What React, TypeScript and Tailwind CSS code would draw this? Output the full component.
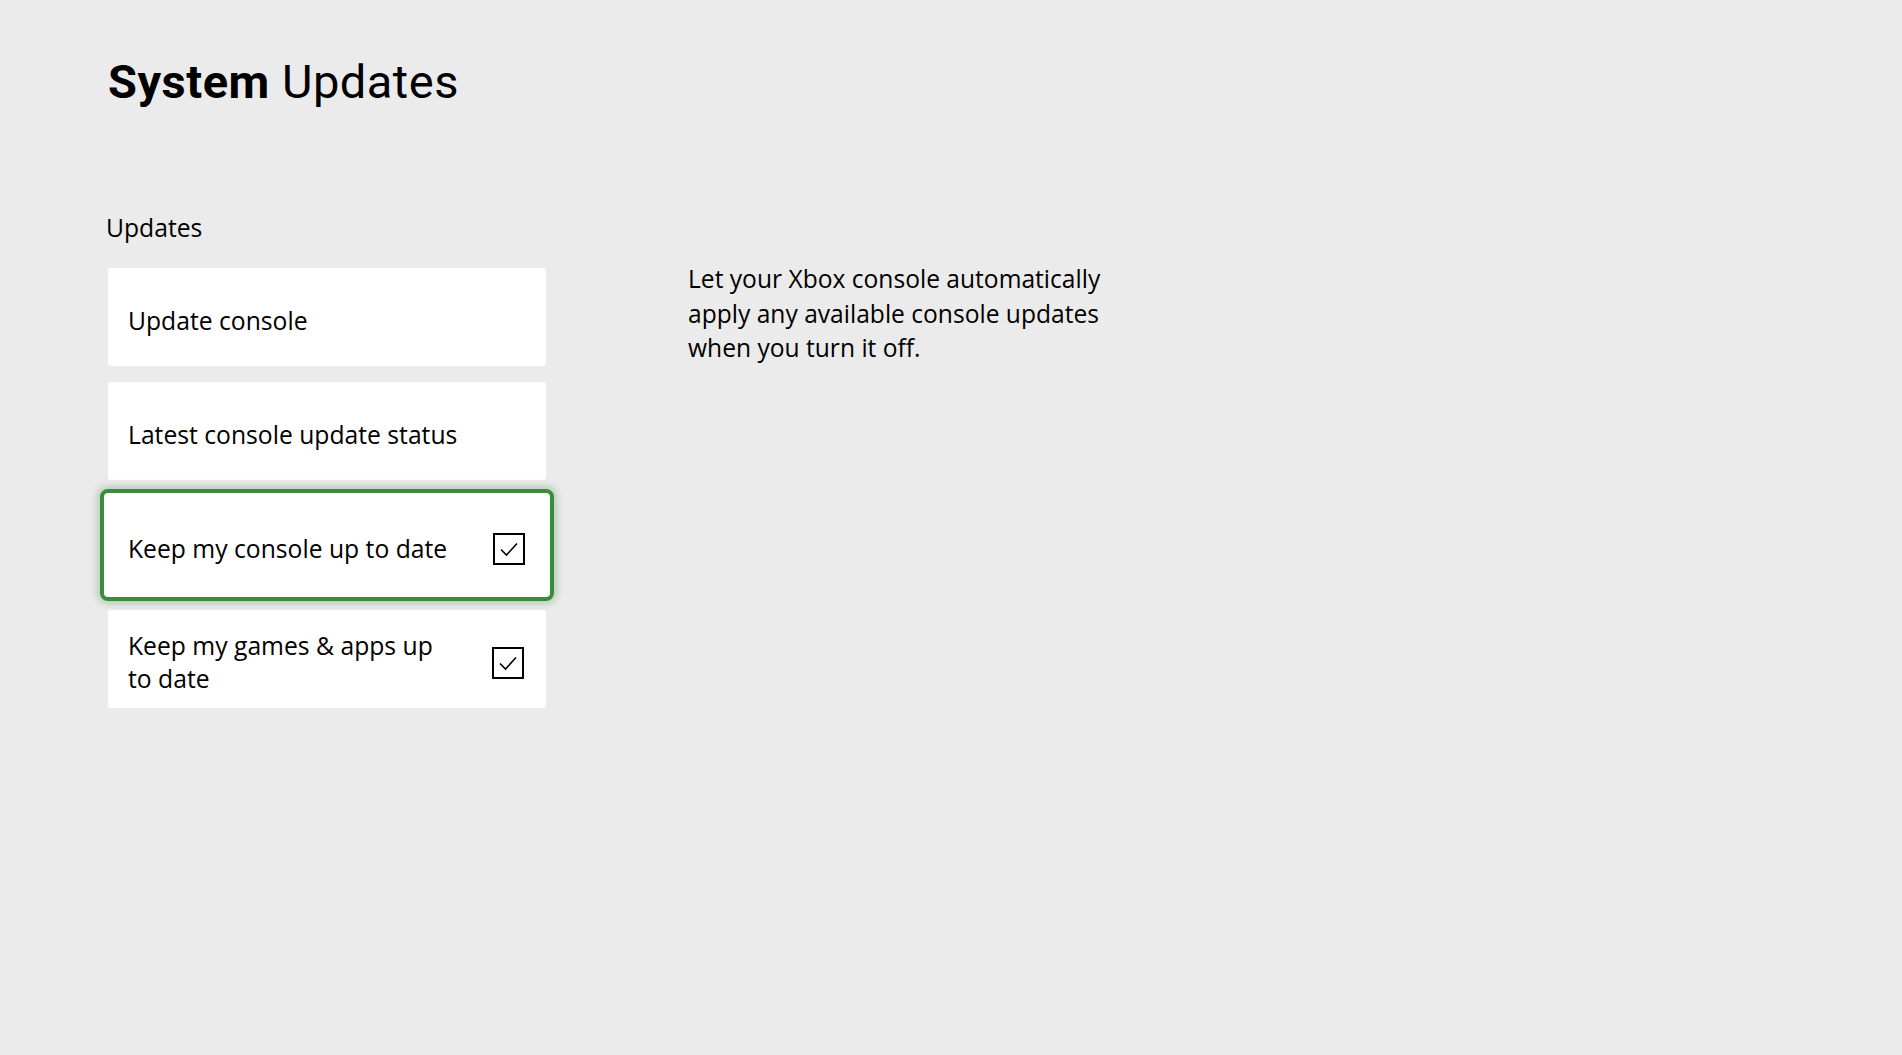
import React from "react";

const body = { fontFamily: '"Open Sans", "Noto Sans", sans-serif' };

function CheckBox() {
    return (
        <div className="w-[32px] h-[32px] mt-[7px] border-2 border-black flex items-center justify-center shrink-0">
            <svg width="22" height="22" viewBox="0 0 22 22" fill="none" stroke="black" strokeWidth="1.6">
                <path d="M3 11.5 L8.5 17 L19 5.5"/>
            </svg>
        </div>
    );
}

function Row({label, checked, focused}: { label: string; checked?: boolean; focused?: boolean }) {
    if (focused) {
        return (
            <div className="-mx-[8px] -my-[7px] rounded-[8px] border-[4px] border-[#3b8b3d] shadow-[0_0_7px_3px_rgba(59,139,61,0.3)] bg-white">
                <div className="h-[104px] flex items-center justify-between pl-[24px] pr-[25px]">
                    <span className="text-[24.7px] leading-[33px] text-black pt-[6px]">{label}</span>
                    {checked && <CheckBox/>}
                </div>
            </div>
        );
    }
    return (
        <div className="h-[98px] bg-white rounded-[3px] flex items-center justify-between pl-[20px] pr-[22px]">
            <span className={`text-[24.7px] leading-[33px] text-black pt-[6px] ${checked ? "max-w-[320px]" : ""}`}>{label}</span>
            {checked && <CheckBox/>}
        </div>
    );
}

export default function App() {
    return (
        <div className="min-h-screen w-full bg-[#ebebeb] pl-[108px] pt-[54px]" style={body}>
            <h1 className="text-[47px] leading-[56px] text-black tracking-[0.5px]" style={{fontFamily: 'Roboto, sans-serif'}}>
                <span className="font-bold">System</span> <span className="font-normal">Updates</span>
            </h1>

            <div className="flex mt-[102px]">
                <div className="w-[438px] flex flex-col">
                    <div className="text-[24.7px] leading-[32px] text-black mb-[24px] -ml-[2px]">Updates</div>
                    <div className="flex flex-col gap-[16px]">
                        <Row label="Update console"/>
                        <Row label="Latest console update status"/>
                        <Row label="Keep my console up to date" checked focused/>
                        <Row label="Keep my games & apps up to date" checked/>
                    </div>
                </div>

                <div className="ml-[142px] mt-[50px] w-[450px] text-[24.6px] leading-[34.5px] text-black">
                    Let your Xbox console automatically apply any available console updates when you turn it off.
                </div>
            </div>
        </div>
    );
}
